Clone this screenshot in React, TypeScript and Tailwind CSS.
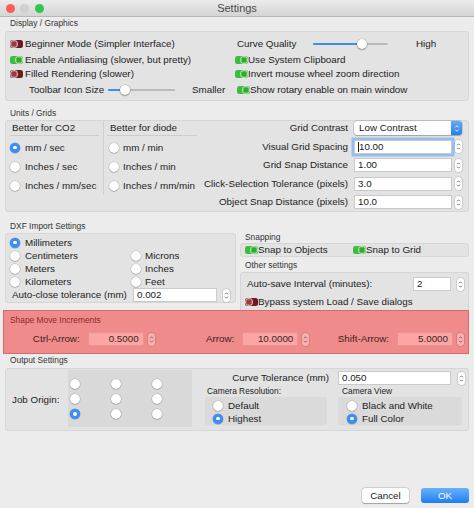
import React from "react";

const Toggle = ({ on }: { on?: boolean }) => (
  <svg width="13" height="8" viewBox="0 0 13 8" className="shrink-0">
    {on ? (
      <>
        <rect x="0" y="0" width="13" height="8" rx="2.5" fill="#3dbd3d" />
        <rect x="5.75" y="0.75" width="6.5" height="6.5" rx="2" fill="#33aa33" stroke="#c9f3c9" strokeWidth="1" />
      </>
    ) : (
      <>
        <rect x="0" y="0" width="13" height="8" rx="2.5" fill="#6c1b21" />
        <rect x="0.75" y="0.75" width="6.5" height="6.5" rx="2" fill="#9a3b42" stroke="#f2d9d9" strokeWidth="1" />
      </>
    )}
  </svg>
);

const Radio = ({ on }: { on?: boolean }) =>
  on ? (
    <span className="w-[10px] h-[10px] shrink-0 rounded-full bg-[#3a8ef5] flex items-center justify-center shadow-[0_0_0_0.5px_rgba(0,60,160,0.4)]">
      <span className="w-[3.5px] h-[3.5px] rounded-full bg-white" />
    </span>
  ) : (
    <span className="w-[10px] h-[10px] shrink-0 rounded-full bg-white shadow-[0_0_0_0.5px_rgba(0,0,0,0.18),0_0.5px_1px_rgba(0,0,0,0.25)]" />
  );

const Stepper = ({ tint }: { tint?: boolean }) => (
  <span
    className={
      tint
        ? "w-[7px] h-[13px] shrink-0 rounded-[3px] bg-[#fbb0b0] shadow-[0_0_0_0.5px_rgba(120,0,0,0.25)] flex items-center justify-center"
        : "w-[7px] h-[13px] shrink-0 rounded-[3px] bg-white shadow-[0_0_0_0.5px_rgba(0,0,0,0.2)] flex items-center justify-center"
    }
  >
    <svg width="5" height="9" viewBox="0 0 5 9">
      <path d="M1 3.3 L2.5 1.8 L4 3.3 M1 5.7 L2.5 7.2 L4 5.7" stroke="#555" strokeWidth="0.8" fill="none" />
    </svg>
  </span>
);

const Field = ({ children, className }: { children: React.ReactNode; className: string }) => (
  <div className={"h-[14px] shrink-0 bg-white border border-[#cacaca] flex items-center px-[3px] " + className}>{children}</div>
);

const Label = ({ children }: { children: React.ReactNode }) => (
  <div className="h-[12px] shrink-0 flex items-center pl-[5px] text-[8.4px] text-[#333]">{children}</div>
);

const box = "rounded-[3px] bg-[#e3e3e3] border border-[#d6d6d6]";

export default function App() {
  return (
    <div className="w-[474px] h-[508px] bg-[#ececec] flex flex-col overflow-hidden font-['Liberation_Sans',Arial,sans-serif] text-[9.8px] leading-none text-[#222]">
      {/* title bar */}
      <div className="h-[17px] shrink-0 flex items-center bg-gradient-to-b from-[#ebebeb] to-[#d4d4d4] border-b border-[#b7b7b7]">
        <div className="w-[70px] flex items-center gap-[5.5px] pl-[5.5px]">
          <span className="w-[9px] h-[9px] rounded-full bg-[#fc5f57]" />
          <span className="w-[9px] h-[9px] rounded-full bg-[#d0d0d0]" />
          <span className="w-[9px] h-[9px] rounded-full bg-[#33c648]" />
        </div>
        <div className="flex-1 text-center text-[11px] text-[#4a4a4a]">Settings</div>
        <div className="w-[70px]" />
      </div>

      <div className="flex-1 flex flex-col px-[5px]">
        {/* Display / Graphics */}
        <Label>Display / Graphics</Label>
        <div className={box + " mt-[2px] h-[70px] pt-[3px] pl-[4px] grid grid-cols-[225px_1fr] grid-rows-[17px_15px_13px_19px]"}>
          <div className="flex items-center gap-[2px]">
            <Toggle />
            <span>Beginner Mode (Simpler Interface)</span>
          </div>
          <div className="flex items-center pl-[2px]">
            <span className="w-[76px]">Curve Quality</span>
            <div className="relative w-[75px] h-[10px] flex items-center">
              <div className="h-[2px] w-full rounded-full bg-[#bababa] flex">
                <div className="h-[2px] w-[65%] rounded-full bg-[#3d8ef3]" />
              </div>
              <span className="absolute left-[44px] w-[10px] h-[10px] rounded-full bg-white shadow-[0_0_0_0.5px_rgba(0,0,0,0.2),0_1px_1.5px_rgba(0,0,0,0.3)]" />
            </div>
            <span className="ml-[28px]">High</span>
          </div>
          <div className="flex items-center gap-[2px]">
            <Toggle on />
            <span>Enable Antialiasing (slower, but pretty)</span>
          </div>
          <div className="flex items-center">
            <Toggle on />
            <span>Use System Clipboard</span>
          </div>
          <div className="flex items-center gap-[2px]">
            <Toggle />
            <span>Filled Rendering (slower)</span>
          </div>
          <div className="flex items-center">
            <Toggle on />
            <span>Invert mouse wheel zoom direction</span>
          </div>
          <div className="flex items-center pl-[19px]">
            <span className="w-[79px]">Toolbar Icon Size</span>
            <div className="relative w-[67px] h-[10px] flex items-center">
              <div className="h-[2px] w-full rounded-full bg-[#bababa] flex">
                <div className="h-[2px] w-[25%] rounded-full bg-[#3d8ef3]" />
              </div>
              <span className="absolute left-[12px] w-[10px] h-[10px] rounded-full bg-white shadow-[0_0_0_0.5px_rgba(0,0,0,0.2),0_1px_1.5px_rgba(0,0,0,0.3)]" />
            </div>
            <span className="ml-[17px]">Smaller</span>
          </div>
          <div className="flex items-center pl-[2px]">
            <Toggle on />
            <span>Show rotary enable on main window</span>
          </div>
        </div>

        {/* Units / Grids */}
        <div className="mt-[6px]">
          <Label>Units / Grids</Label>
        </div>
        <div className={box + " mt-[1px] h-[92px] pl-[4px] flex"}>
          <div className="w-[94px] h-[74px] border-r border-[#d0d0d0] flex flex-col">
            <div className="h-[16px] mr-[4px] border-b border-[#cdcdcd] flex items-center pl-[2px]">Better for CO2</div>
            <div className="pt-[2px] flex flex-col">
              <div className="h-[19px] flex items-center gap-[5px]"><Radio on /><span>mm / sec</span></div>
              <div className="h-[19px] flex items-center gap-[5px]"><Radio /><span>Inches / sec</span></div>
              <div className="h-[19px] flex items-center gap-[5px]"><Radio /><span>Inches / mm/sec</span></div>
            </div>
          </div>
          <div className="w-[93px] h-[74px] flex flex-col">
            <div className="h-[16px] ml-[3px] border-b border-[#cdcdcd] flex items-center pl-[3px]">Better for diode</div>
            <div className="pt-[2px] flex flex-col pl-[5px]">
              <div className="h-[19px] flex items-center gap-[4px]"><Radio /><span>mm / min</span></div>
              <div className="h-[19px] flex items-center gap-[4px]"><Radio /><span>Inches / min</span></div>
              <div className="h-[19px] flex items-center gap-[4px]"><Radio /><span className="whitespace-nowrap">Inches / mm/min</span></div>
            </div>
          </div>
          <div className="flex-1 flex flex-col gap-[4.5px] pt-[0px] pr-[6px]">
            <div className="h-[14px] flex items-center">
              <span className="flex-1 text-right pr-[6px]">Grid Contrast</span>
              <div className="w-[108px] h-[14px] bg-white rounded-[3px] shadow-[0_0_0_0.5px_rgba(0,0,0,0.2),0_0.5px_1px_rgba(0,0,0,0.2)] flex items-center">
                <span className="flex-1 pl-[5px]">Low Contrast</span>
                <span className="w-[11px] h-[14px] rounded-r-[3px] bg-gradient-to-b from-[#62acf8] to-[#1f7ff0] flex items-center justify-center">
                  <svg width="6" height="9" viewBox="0 0 6 9">
                    <path d="M1.3 3.4 L3 1.7 L4.7 3.4 M1.3 5.6 L3 7.3 L4.7 5.6" stroke="#fff" strokeWidth="0.9" fill="none" />
                  </svg>
                </span>
              </div>
            </div>
            <div className="h-[14px] flex items-center">
              <span className="flex-1 text-right pr-[6px]">Visual Grid Spacing</span>
              <Field className="w-[98px] shadow-[0_0_0_2.5px_#94bdf0] border-[#7aa9e6]">
                <span className="w-[1px] h-[10px] bg-[#222]" />
                <span>10.00</span>
              </Field>
              <span className="ml-[3px]"><Stepper /></span>
            </div>
            <div className="h-[14px] flex items-center">
              <span className="flex-1 text-right pr-[6px]">Grid Snap Distance</span>
              <Field className="w-[98px]">1.00</Field>
              <span className="ml-[3px]"><Stepper /></span>
            </div>
            <div className="h-[14px] flex items-center">
              <span className="flex-1 text-right pr-[6px] whitespace-nowrap">Click-Selection Tolerance (pixels)</span>
              <Field className="w-[98px]">3.0</Field>
              <span className="ml-[3px]"><Stepper /></span>
            </div>
            <div className="h-[14px] flex items-center">
              <span className="flex-1 text-right pr-[6px] whitespace-nowrap">Object Snap Distance (pixels)</span>
              <Field className="w-[98px]">10.0</Field>
              <span className="ml-[3px]"><Stepper /></span>
            </div>
          </div>
        </div>

        {/* DXF + snapping */}
        <div className="mt-[8px] flex items-start">
          <div className="w-[231px] flex flex-col">
            <Label>DXF Import Settings</Label>
            <div className={box + " mt-[1px] h-[70px] pt-[2px] pl-[4px] flex flex-col"}>
              <div className="grid grid-cols-[121px_1fr] grid-rows-[13px_13px_13px_13px]">
                <div className="flex items-center gap-[5px]"><Radio on /><span>Millimeters</span></div>
                <div />
                <div className="flex items-center gap-[5px]"><Radio /><span>Centimeters</span></div>
                <div className="flex items-center gap-[4px]"><Radio /><span>Microns</span></div>
                <div className="flex items-center gap-[5px]"><Radio /><span>Meters</span></div>
                <div className="flex items-center gap-[4px]"><Radio /><span>Inches</span></div>
                <div className="flex items-center gap-[5px]"><Radio /><span>Kilometers</span></div>
                <div className="flex items-center gap-[4px]"><Radio /><span>Feet</span></div>
              </div>
              <div className="h-[14px] flex items-center">
                <span className="w-[123px] pl-[2px] whitespace-nowrap">Auto-close tolerance (mm)</span>
                <Field className="w-[84px]">0.002</Field>
                <span className="ml-[6px]"><Stepper /></span>
              </div>
            </div>
          </div>
          <div className="ml-[4px] flex-1 flex flex-col pt-[11px]">
            <Label>Snapping</Label>
            <div className={box + " h-[14px] pl-[4px] flex items-center"}>
              <div className="w-[108px] flex items-center">
                <Toggle on />
                <span>Snap to Objects</span>
              </div>
              <Toggle on />
              <span>Snap to Grid</span>
            </div>
            <div className="mt-[2px]">
              <Label>Other settings</Label>
            </div>
            <div className={box + " mt-[1px] h-[38px] rounded-b-none border-b-0 pt-[4px] flex flex-col"}>
              <div className="h-[14px] flex items-center pr-[4px]">
                <span className="flex-1 pl-[6px]">Auto-save Interval (minutes):</span>
                <Field className="w-[38px]">2</Field>
                <span className="ml-[6px]"><Stepper /></span>
              </div>
              <div className="mt-[5px] h-[12px] flex items-center pl-[4px]">
                <Toggle />
                <span>Bypass system Load / Save dialogs</span>
              </div>
            </div>
          </div>
        </div>

        {/* Shape Move Increments (highlighted) */}
        <div className="-ml-[2px] h-[44px] shrink-0 bg-[#ef8b8b] border border-[#d56a6a] pt-[3px] flex flex-col">
          <div className="h-[12px] flex items-center pl-[6px] text-[8.4px] text-[#8e2a2a]">Shape Move Increments</div>
          <div className="mt-[6px] h-[14px] grid grid-cols-3 text-[#3c2424]">
            {[
              ["Ctrl-Arrow:", "0.5000"],
              ["Arrow:", "10.0000"],
              ["Shift-Arrow:", "5.0000"],
            ].map(([l, v]) => (
              <div key={l} className="flex items-center pr-[4px]">
                <span className="flex-1 text-right">{l}</span>
                <div className="ml-[8px] w-[56px] h-[14px] bg-[#fba5a5] border border-[#e89292] flex items-center justify-end px-[4px]">{v}</div>
                <span className="ml-[4px]"><Stepper tint /></span>
              </div>
            ))}
          </div>
        </div>

        {/* Output Settings */}
        <Label>Output Settings</Label>
        <div className={box + " mt-[2px] h-[63px] flex"}>
          <div className="w-[62px] flex items-center pl-[6px]">Job Origin:</div>
          <div className="mt-[1px] w-[124px] h-[57px] bg-[#d9d9d9] pt-[6.5px] pl-[2px] flex flex-col">
            {[0, 1, 2].map((r) => (
              <div key={r} className="h-[15px] flex items-center gap-[31px]">
                <Radio on={r === 2} />
                <Radio />
                <Radio />
              </div>
            ))}
          </div>
          <div className="flex-1 flex flex-col pt-[2px]">
            <div className="h-[14px] flex items-center pr-[3px]">
              <span className="flex-1 text-right pr-[9px]">Curve Tolerance (mm)</span>
              <Field className="w-[113px]">0.050</Field>
              <span className="ml-[7px]"><Stepper /></span>
            </div>
            <div className="flex pl-[13px]">
              <div className="w-[122px] flex flex-col">
                <div className="h-[12px] flex items-center pl-[2px] text-[8.4px]">Camera Resolution:</div>
                <div className="h-[28px] bg-[#dadada] rounded-[2px] pt-[2px] pl-[8px] flex flex-col">
                  <div className="h-[13px] flex items-center gap-[5px]"><Radio /><span>Default</span></div>
                  <div className="h-[13px] flex items-center gap-[5px]"><Radio on /><span>Highest</span></div>
                </div>
              </div>
              <div className="ml-[11px] w-[124px] flex flex-col">
                <div className="h-[12px] flex items-center pl-[4px] text-[8.4px]">Camera View</div>
                <div className="h-[28px] bg-[#dadada] rounded-[2px] pt-[2px] pl-[9px] flex flex-col">
                  <div className="h-[13px] flex items-center gap-[5px]"><Radio /><span>Black and White</span></div>
                  <div className="h-[13px] flex items-center gap-[5px]"><Radio on /><span>Full Color</span></div>
                </div>
              </div>
            </div>
          </div>
        </div>

        <div className="flex-1" />
        <div className="h-[15px] mb-[5px] flex justify-end gap-[12px]">
          <button className="w-[47px] h-[15px] rounded-[3px] bg-white shadow-[0_0_0_0.5px_rgba(0,0,0,0.2),0_0.5px_1px_rgba(0,0,0,0.25)] text-[#222]">Cancel</button>
          <button className="w-[48px] h-[15px] rounded-[3px] bg-gradient-to-b from-[#68b1fa] to-[#1a7ef0] text-white">OK</button>
        </div>
      </div>
    </div>
  );
}
